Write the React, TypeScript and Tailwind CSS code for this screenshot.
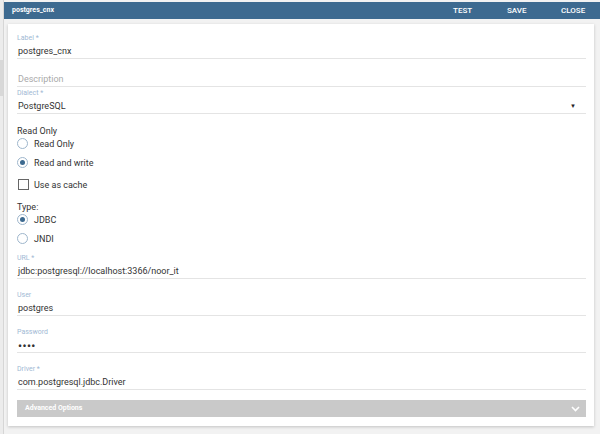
import React from "react";

const font = { fontFamily: "Roboto, 'Noto Sans', sans-serif" };

function Field({ label, value, required, children, className = "" }: { label: string; value?: React.ReactNode; required?: boolean; children?: React.ReactNode; className?: string }) {
  return (
    <div className={`flex flex-col ${className}`}>
      <div className="text-[7px] leading-[9px] h-[9px] text-[#9fb9d4]">{label}{required ? " *" : ""}</div>
      <div className="flex items-end h-[16px] pb-[2px] border-b border-[#e4e4e4] text-[9px] leading-[10px] text-[#333] pl-[1px]">
        <span className="flex-1">{value}</span>
        {children}
      </div>
    </div>
  );
}

function Radio({ checked, label, className = "" }: { checked?: boolean; label: string; className?: string }) {
  return (
    <div className={`flex items-center gap-[6px] h-[14px] ${className}`}>
      <span className="w-[11px] h-[11px] rounded-full border border-[#9eb6cc] flex items-center justify-center bg-white">
        {checked && <span className="w-[5px] h-[5px] rounded-full bg-[#3d6a90]" />}
      </span>
      <span className="text-[9px] leading-[10px] text-[#333] pt-[1px]">{label}</span>
    </div>
  );
}

export default function App() {
  return (
    <div className="w-[600px] h-[434px] flex bg-[#f2f2f2] overflow-hidden" style={font}>
      <div className="w-[4px] h-full bg-[#ececec] border-r border-[#d6d6d6] flex flex-col">
        <div className="h-[60px]" />
        <div className="h-[36px] bg-[#d8d8d8]" />
      </div>
      <div className="flex-1 flex flex-col pt-[2px]">
        <div className="h-[17px] bg-[#3d6a90] flex items-center pl-[8px] text-white text-[7px] font-bold">
          <span className="flex-1">postgres_cnx</span>
          <span className="w-[54px] font-medium text-[8px]">TEST</span>
          <span className="w-[54px] font-medium text-[8px]">SAVE</span>
          <span className="w-[39px] font-medium text-[8px]">CLOSE</span>
        </div>
        <div className="flex-1 flex pt-[5px] pl-[4px] pr-[6px] pb-[8px]">
          <div className="flex-1 bg-white shadow-[0_1px_3px_rgba(0,0,0,0.2)] pl-[9px] pr-[8px] pt-[10px] flex flex-col">
            <Field label="Label" required value="postgres_cnx" />
            <div className="mt-[12px] flex items-end h-[16px] pb-[2px] border-b border-[#e4e4e4] text-[9px] leading-[10px] text-[#aaa] pl-[1px]">Description</div>
            <Field className="mt-[2px]" label="Dialect" required value="PostgreSQL">
              <span className="text-[6px] mr-[10px] text-[#222]">▼</span>
            </Field>
            <div className="mt-[12px] text-[9px] text-[#333] leading-[10px] h-[10px]">Read Only</div>
            <Radio label="Read Only" />
            <Radio className="mt-[5px]" checked label="Read and write" />
            <div className="flex items-center gap-[5px] h-[14px] mt-[8px] pl-[1px]">
              <span className="w-[11px] h-[11px] border border-[#666] bg-white" />
              <span className="text-[9px] leading-[10px] pt-[1px] text-[#333]">Use as cache</span>
            </div>
            <div className="mt-[11px] text-[9px] text-[#333] leading-[10px] h-[10px]">Type:</div>
            <Radio checked label="JDBC" />
            <Radio className="mt-[5px]" label="JNDI" />
            <Field className="mt-[9px]" label="URL" required value="jdbc:postgresql://localhost:3366/noor_it" />
            <Field className="mt-[12px]" label="User" value="postgres" />
            <Field className="mt-[12px]" label="Password" value={<span className="inline-block translate-y-[2px] text-[11px] font-bold tracking-[0.5px]">••••</span>} />
            <Field className="mt-[12px]" label="Driver" required value="com.postgresql.jdbc.Driver" />
            <div className="mt-[10px] h-[17px] bg-[#c9c9c9] flex items-center pl-[8px] pr-[6px] text-white text-[7px] font-bold">
              <span className="flex-1">Advanced Options</span>
              <svg width="9" height="6" viewBox="0 0 9 6"><path d="M1 1 L4.5 4.5 L8 1" stroke="white" strokeWidth="1.6" fill="none" /></svg>
            </div>
          </div>
        </div>
      </div>
    </div>
  );
}
